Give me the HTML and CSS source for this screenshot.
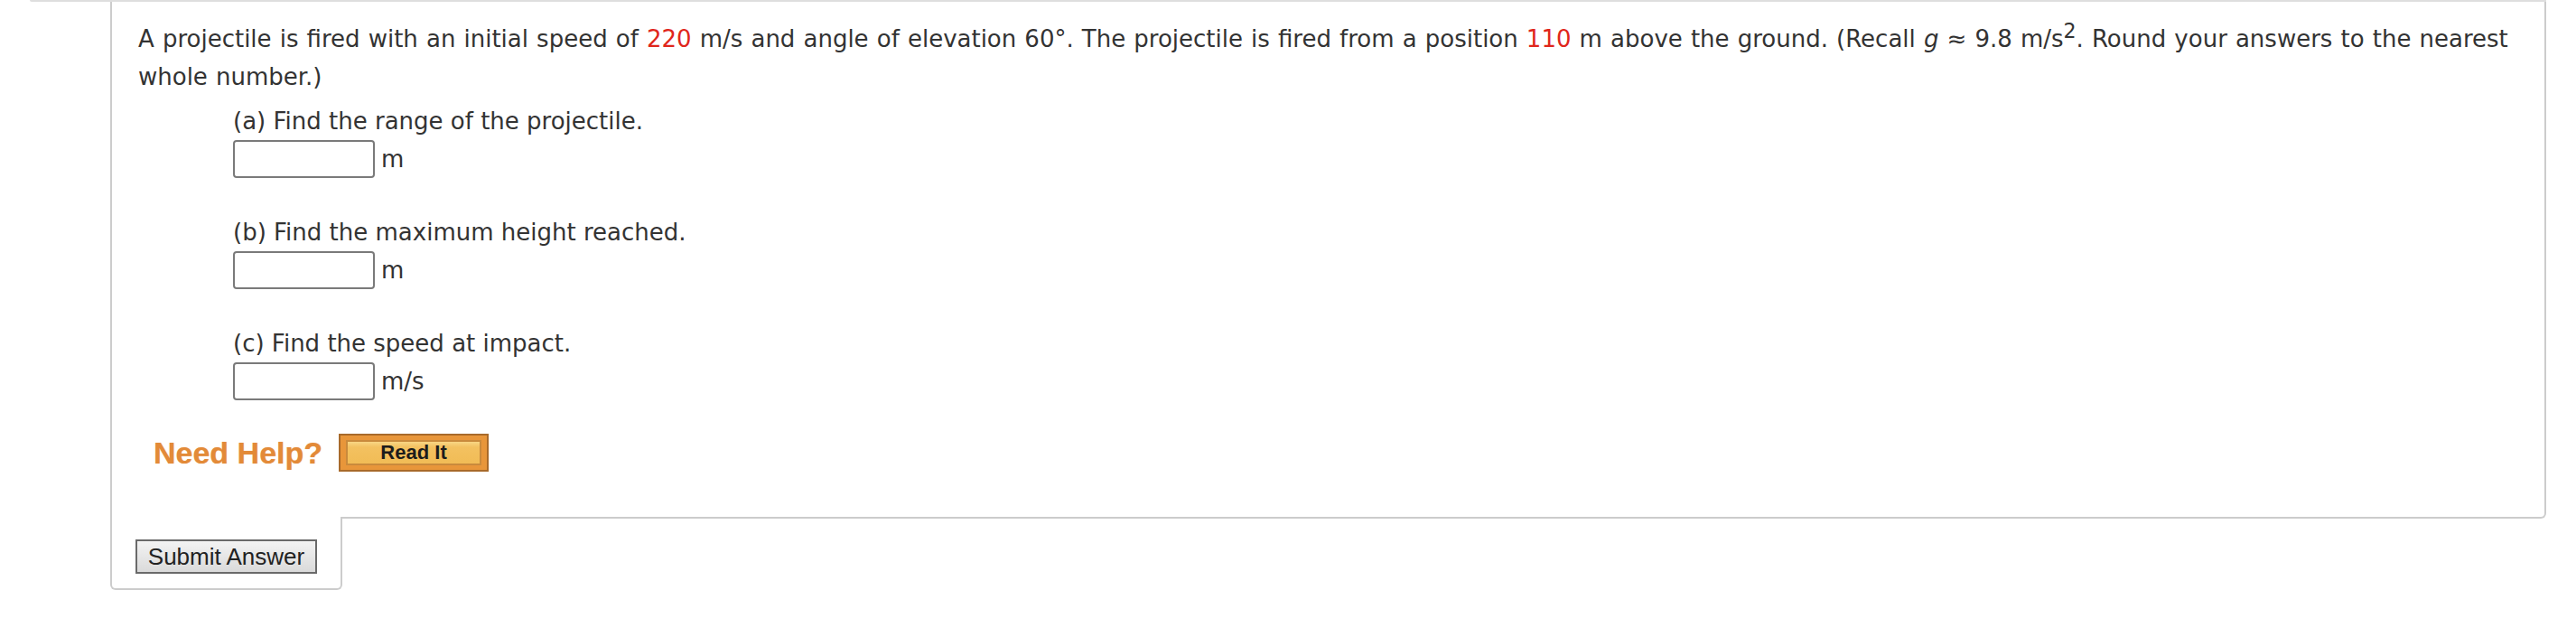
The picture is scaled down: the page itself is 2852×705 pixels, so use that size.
FILE: index.html
```html
<!DOCTYPE html>
<html lang="en">
<head>
<meta charset="utf-8">
<title>Projectile question</title>
<link rel="stylesheet" href="styles.css">
</head>
<body>
<div class="prev"></div>
<div class="question">
  <p class="intro">A projectile is fired with an initial speed of <span class="red">220</span> m/s and angle of elevation 60°. The projectile is fired from a position <span class="red">110</span> m above the ground. (Recall <i>g</i> ≈ 9.8 m/s<sup>2</sup>. Round your answers to the nearest whole number.)</p>
  <div class="parts">
    <div class="part">
      <div class="label">(a) Find the range of the projectile.</div>
      <div class="answer"><input class="field" type="text" aria-label="range"><span class="unit">m</span></div>
    </div>
    <div class="part">
      <div class="label">(b) Find the maximum height reached.</div>
      <div class="answer"><input class="field" type="text" aria-label="maximum height"><span class="unit">m</span></div>
    </div>
    <div class="part">
      <div class="label">(c) Find the speed at impact.</div>
      <div class="answer"><input class="field" type="text" aria-label="speed at impact"><span class="unit">m/s</span></div>
    </div>
  </div>
  <div class="help">
    <span class="need">Need Help?</span>
    <span class="readit"><span class="readit-inner">Read It</span></span>
  </div>
</div>
<div class="submit-tab"><button class="submit" type="button">Submit Answer</button></div>
</body>
</html>
```
FILE: styles.css
```css
html, body {
  margin: 0;
  padding: 0;
  background: #ffffff;
}

body {
  font-family: "DejaVu Sans", Verdana, sans-serif;
  color: #333333;
}

.prev {
  margin-left: 33px;
  width: 2786px;
  height: 0;
  border-bottom: 2px solid #dedede;
  border-bottom-left-radius: 6px;
}

.question {
  box-sizing: border-box;
  margin-left: 122px;
  width: 2697px;
  border: 2px solid #cccccc;
  border-top: none;
  border-bottom-right-radius: 6px;
  padding: 20px 10px 50px 29px;
  background: #ffffff;
}

.intro {
  margin: 0;
  font-size: 26px;
  line-height: 42px;
  word-spacing: 0.85px;
}

.intro sup {
  font-size: 0.85em;
  line-height: 0;
  vertical-align: 0.45em;
}

.red {
  color: #e0261b;
}

.parts {
  margin: 8px 0 0 105px;
}

.part {
  margin-bottom: 40px;
}

.part:last-child {
  margin-bottom: 0;
}

.label {
  font-size: 26px;
  line-height: 40px;
}

.answer {
  display: flex;
  align-items: center;
  margin-top: 1px;
  height: 42px;
}

.field {
  box-sizing: border-box;
  width: 157px;
  height: 42px;
  margin: 0;
  padding: 0 6px;
  border: 2px solid #7a7a7a;
  border-radius: 4px;
  background: #ffffff;
  font-family: "DejaVu Sans", Verdana, sans-serif;
  font-size: 24px;
}

.unit {
  margin-left: 7px;
  font-size: 26px;
  line-height: 40px;
}

.help {
  display: flex;
  align-items: center;
  gap: 18px;
  margin: 37px 0 0 17px;
}

.need {
  font-family: "Liberation Sans", Arial, sans-serif;
  font-weight: bold;
  font-size: 34px;
  color: #e38a38;
  text-shadow: 0 0 1px rgba(227, 138, 56, 0.6);
}

.readit {
  box-sizing: border-box;
  display: block;
  width: 166px;
  height: 42px;
  padding: 5px 6px;
  border: 2px solid #a86a2a;
  background: #e8963a;
}

.readit-inner {
  box-sizing: border-box;
  display: block;
  height: 28px;
  border: 2px solid #c98a3c;
  background: linear-gradient(#f8d684 0, #f3c160 25%, #f1bc56 100%);
  font-family: "Liberation Sans", Arial, sans-serif;
  font-weight: bold;
  font-size: 22px;
  line-height: 24px;
  text-align: center;
  color: #1c1c1c;
}

.submit-tab {
  box-sizing: border-box;
  margin: -2px 0 0 122px;
  width: 257px;
  border: 2px solid #cccccc;
  border-top: none;
  border-radius: 0 0 6px 6px;
  padding: 25px 0 16px 26px;
  background: #ffffff;
}

.submit {
  display: block;
  box-sizing: border-box;
  width: 201px;
  height: 38px;
  margin: 0;
  padding: 0;
  border: 2px solid #6a6a6a;
  border-radius: 0;
  background: linear-gradient(#f3f3f3, #dadada);
  font-family: "Liberation Sans", Arial, sans-serif;
  font-size: 26px;
  line-height: 32px;
  color: #222222;
}
```
